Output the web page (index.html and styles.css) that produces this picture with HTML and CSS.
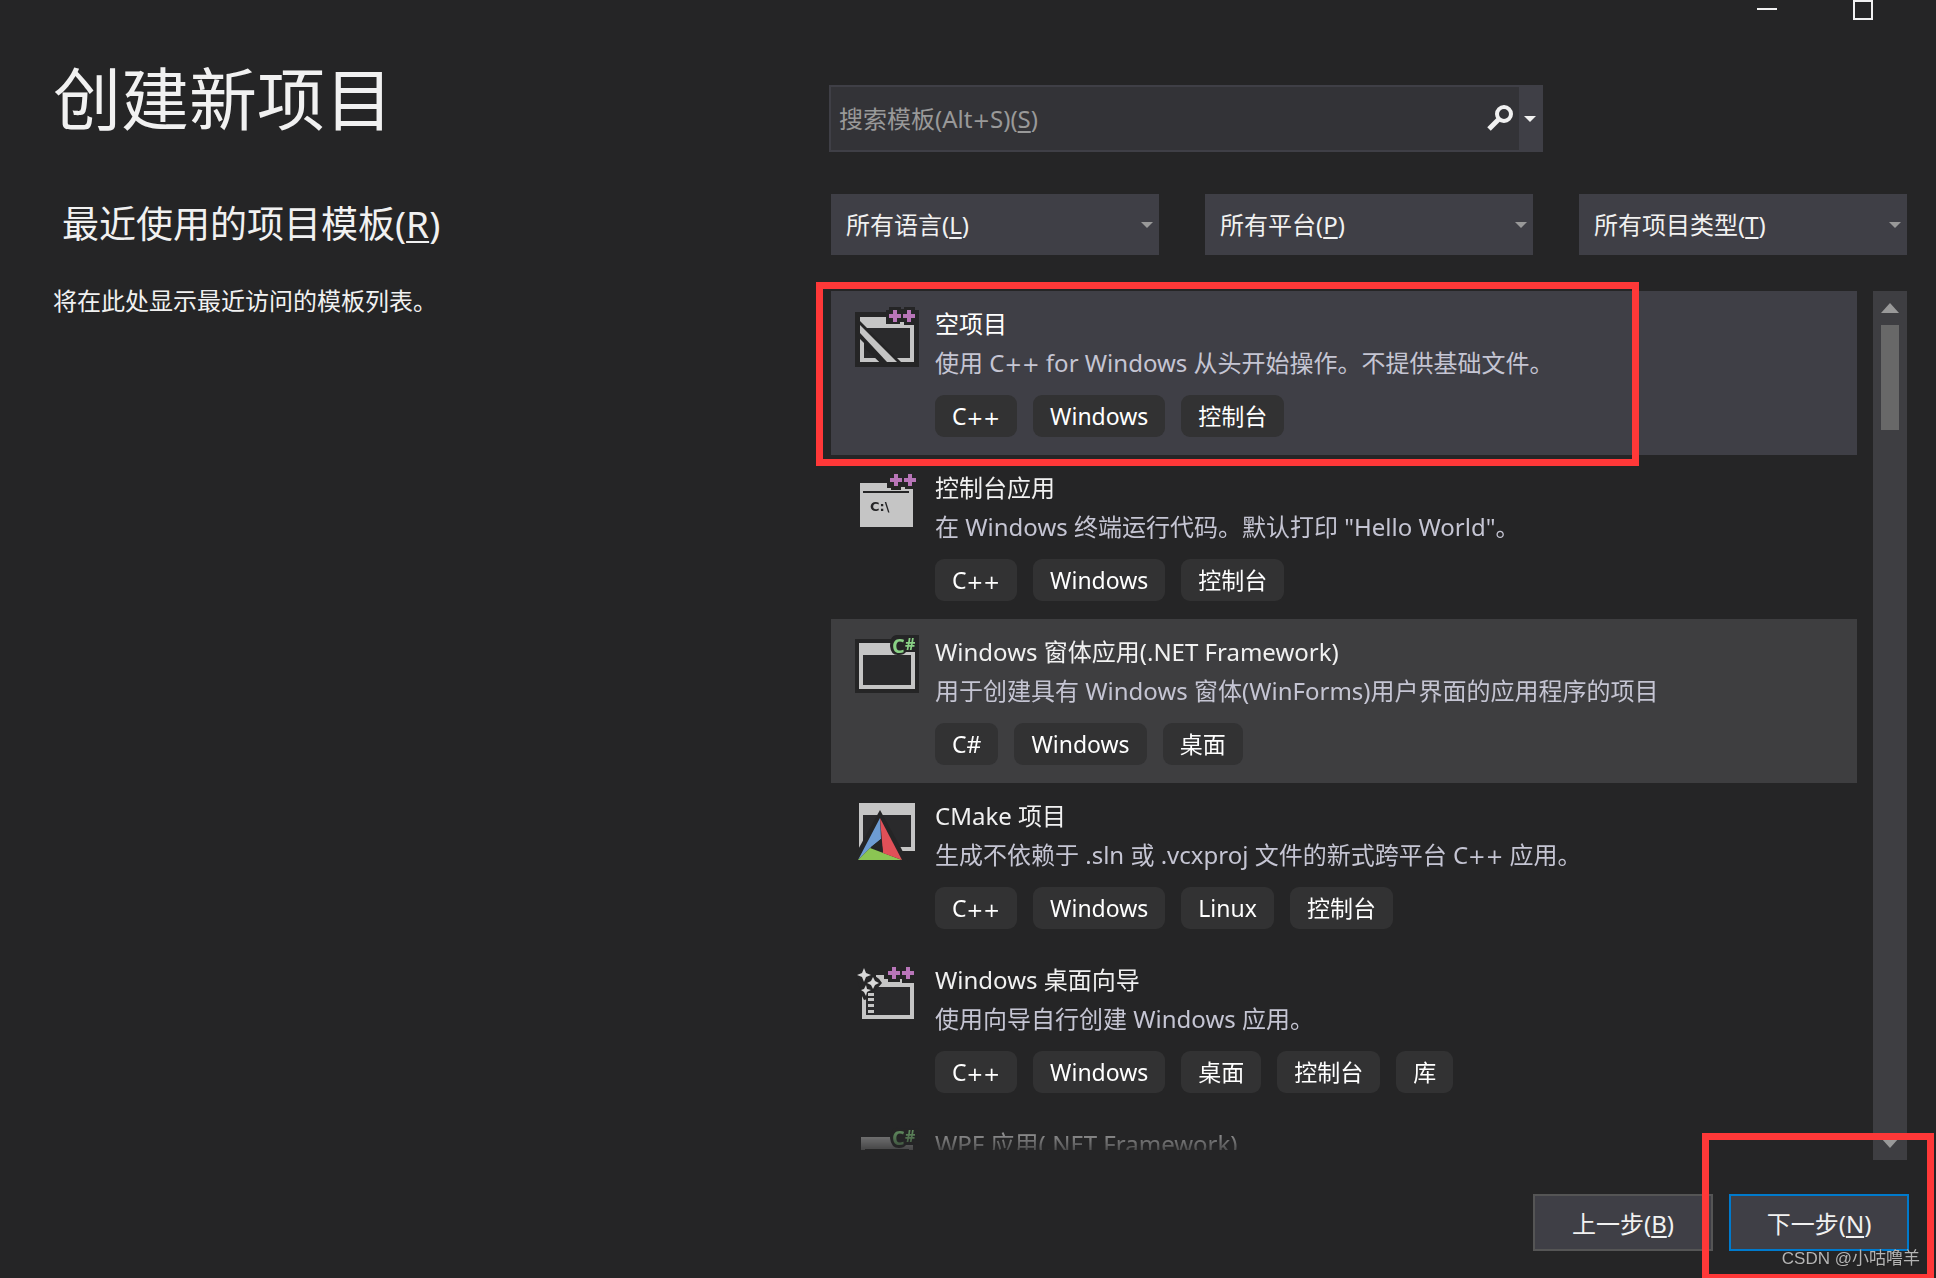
FILE: index.html
```html
<!DOCTYPE html>
<html lang="zh-CN">
<head>
<meta charset="utf-8">
<title>创建新项目</title>
<link rel="stylesheet" href="styles.css">
</head>
<body>
<div class="window">
  <div class="window-controls">
    <button type="button" aria-label="最小化"><span class="minimize"></span></button>
    <button type="button" aria-label="最大化"><span class="maximize"></span></button>
  </div>

  <aside class="recent">
    <h1>创建新项目</h1>
    <h2>最近使用的项目模板(<u>R</u>)</h2>
    <p>将在此处显示最近访问的模板列表。</p>
  </aside>

  <main class="browser">
    <div class="search">
      <input id="search" type="text" accesskey="s">
      <label for="search">搜索模板(Alt<span class="plus">+</span>S)(<u>S</u>)</label>
      <button class="search-go" type="button" aria-label="搜索">
        <svg width="26" height="26" viewBox="0 0 26 26" fill="none" stroke="#f1f1f1"><circle cx="17" cy="9" r="7" stroke-width="4"/><path d="M12 14L2 24" stroke-width="5"/></svg>
      </button>
      <button class="search-more" type="button" aria-label="搜索选项">
        <svg width="12" height="6" viewBox="0 0 12 6"><path d="M0 0h12L6 6z" fill="#f1f1f1"/></svg>
      </button>
    </div>

    <div class="filters">
      <div class="filter">
        <select id="language"><option value=""></option><option>C++</option><option>C#</option></select>
        <label for="language">所有语言(<u>L</u>)</label>
        <svg width="12" height="6" viewBox="0 0 12 6"><path d="M0 0h12L6 6z" fill="#999"/></svg>
      </div>
      <div class="filter">
        <select id="platform"><option value=""></option><option>Windows</option><option>Linux</option></select>
        <label for="platform">所有平台(<u>P</u>)</label>
        <svg width="12" height="6" viewBox="0 0 12 6"><path d="M0 0h12L6 6z" fill="#999"/></svg>
      </div>
      <div class="filter">
        <select id="type"><option value=""></option><option>控制台</option><option>桌面</option><option>库</option></select>
        <label for="type">所有项目类型(<u>T</u>)</label>
        <svg width="12" height="6" viewBox="0 0 12 6"><path d="M0 0h12L6 6z" fill="#999"/></svg>
      </div>
    </div>

    <div class="results">
      <ul class="templates">
        <li class="template selected">
          <svg class="icon" viewBox="0 0 64 64">
            <path d="M0 6H31V4H34V1H46V3H49V1H60V4H64V61H0z" fill="#252526"/>
            <path d="M5 11H31V18H45V16H49V19H59V56H5z" fill="#c5c5c5"/>
            <path d="M9 22H55V52H9z" fill="#2a2a2c"/>
            <path d="M5 15V38L24 56H46z" fill="#252526"/>
            <path d="M5 33L9 37V52H20L24 56H5z" fill="#c5c5c5"/>
            <path d="M5 19V27L32 56H42z" fill="#c5c5c5"/>
            <path d="M38 4h4v4h4v4h-4v4h-4v-4h-4v-4h4zM52 4h4v4h4v4h-4v4h-4v-4h-4v-4h4z" fill="#b875b8"/>
          </svg>
          <div class="info">
            <h3>空项目</h3>
            <p>使用 C<span class="plus">++</span> for Windows 从头开始操作。不提供基础文件。</p>
            <div class="tags"><span>C<span class="plus">++</span></span><span>Windows</span><span>控制台</span></div>
          </div>
        </li>
        <li class="template">
          <svg class="icon" viewBox="0 0 64 64">
            <path d="M5 13H32V18H36V20H46V17H50V19H58V57H5z" fill="#c5c5c5"/>
            <path d="M8 21H54V23H8z" fill="#252526"/>
            <path d="M39 4h4v4h4v4h-4v4h-4v-4h-4v-4h4zM53 4h4v4h4v4h-4v4h-4v-4h-4v-4h4z" fill="#b875b8"/>
            <text x="15" y="41" class="console">C:\</text>
          </svg>
          <div class="info">
            <h3>控制台应用</h3>
            <p>在 Windows 终端运行代码。默认打印 "Hello World"。</p>
            <div class="tags"><span>C<span class="plus">++</span></span><span>Windows</span><span>控制台</span></div>
          </div>
        </li>
        <li class="template hovered">
          <svg class="icon" viewBox="0 0 64 64">
            <path d="M0 5H36Q38 1 42 1H64V59H0z" fill="#252526"/>
            <path d="M4 9H60V55H4z" fill="#c5c5c5"/>
            <path d="M8 21H56V51H8z" fill="#2a2a2c"/>
            <path d="M64 1H44Q35 2 35 12Q36 22 44 21Q49 21 51 18H64z" fill="#252526"/>
            <text x="37" y="19" class="csharp">C</text><text x="50" y="16" class="csharp hash">#</text>
          </svg>
          <div class="info">
            <h3>Windows 窗体应用(.NET Framework)</h3>
            <p>用于创建具有 Windows 窗体(WinForms)用户界面的应用程序的项目</p>
            <div class="tags"><span>C#</span><span>Windows</span><span>桌面</span></div>
          </div>
        </li>
        <li class="template">
          <svg class="icon" viewBox="0 0 64 64">
            <path d="M4 5H60V53H4z" fill="#c5c5c5"/>
            <path d="M8 17H56V49H8z" fill="#2a2a2c"/>
            <path d="M25 12L0 57V64H53L46 50z" fill="#252526"/>
            <path d="M25 20L3 62L15 50L26 41z" fill="#6d9cd3"/>
            <path d="M3 62L15 50L47 62z" fill="#8bc553"/>
            <path d="M25 20L28 55L47 62z" fill="#e15058"/>
            <path d="M16 49L26 41L28 54z" fill="#252526"/>
          </svg>
          <div class="info">
            <h3>CMake 项目</h3>
            <p>生成不依赖于 .sln 或 .vcxproj 文件的新式跨平台 C<span class="plus">++</span> 应用。</p>
            <div class="tags"><span>C<span class="plus">++</span></span><span>Windows</span><span>Linux</span><span>控制台</span></div>
          </div>
        </li>
        <li class="template">
          <svg class="icon" viewBox="0 0 64 64">
            <path d="M21 13H29V17H33V20H45V17H47V21H59V57H7V21H21z" fill="#c5c5c5"/>
            <path d="M11 25H55V53H11z" fill="#2a2a2c"/>
            <path d="M0 8H17L20 14Q24 16 27 21Q22 27 19 29Q15 31 13 37L9 38L6 32z" fill="#252526"/>
            <path d="M13 31h6v3h-6zM13 36h6v3h-6zM13 42h6v3h-6zM13 48h6v3h-6z" fill="#c5c5c5"/>
            <path d="M9 6L11 11L16 13L11 15L9 20L7 15L2 13L7 11zM18 15L20 19L24 21L20 23L18 27L16 23L12 21L16 19zM11 23L12 27L16 28L12 30L11 34L9 30L6 28L9 27z" fill="#d8d8d8"/>
            <path d="M37 5h4v4h4v4h-4v4h-4v-4h-4v-4h4zM51 5h4v4h4v4h-4v4h-4v-4h-4v-4h4z" fill="#b875b8"/>
          </svg>
          <div class="info">
            <h3>Windows 桌面向导</h3>
            <p>使用向导自行创建 Windows 应用。</p>
            <div class="tags"><span>C<span class="plus">++</span></span><span>Windows</span><span>桌面</span><span>控制台</span><span>库</span></div>
          </div>
        </li>
        <li class="template">
          <svg class="icon" viewBox="0 0 64 64">
            <path d="M6 11H58V57H6z" fill="#c5c5c5"/>
            <path d="M10 23H54V53H10z" fill="#2a2a2c"/>
            <path d="M64 1H44Q35 2 35 12Q36 22 44 22Q49 22 51 19H64z" fill="#252526"/>
            <text x="37" y="19" class="csharp">C</text><text x="50" y="16" class="csharp hash">#</text>
          </svg>
          <div class="info">
            <h3>WPF 应用(.NET Framework)</h3>
          </div>
        </li>
      </ul>
      <div class="scrollbar">
        <svg width="18" height="10" viewBox="0 0 18 10"><path d="M9 0L18 10H0z" fill="#999"/></svg>
        <div class="thumb"></div>
        <svg width="18" height="10" viewBox="0 0 18 10"><path d="M9 10L18 0H0z" fill="#999"/></svg>
      </div>
    </div>

    <div class="actions">
      <button type="button">上一步(<u>B</u>)</button>
      <button type="button" class="primary">下一步(<u>N</u>)</button>
    </div>
    <div class="callout callout-template"></div>
  </main>

  <div class="callout callout-next"></div>
  <div class="watermark">CSDN @小咕噜羊</div>
</div>
</body>
</html>
```
FILE: styles.css
```css
* {
  box-sizing: border-box;
  margin: 0;
  padding: 0;
}

body {
  background: #252526;
  color: #f1f1f1;
  font-family: "Noto Sans", "Noto Sans CJK SC", sans-serif;
  font-size: 24px;
}

button,
input,
select {
  font: inherit;
  color: inherit;
  border: 0;
  border-radius: 0;
  background: none;
  outline: 0;
}

h1,
h2,
h3 {
  font-weight: 400;
}

u {
  text-decoration-thickness: 2px;
  text-underline-offset: 3px;
  text-decoration-skip-ink: none;
}

.window {
  position: relative;
  display: grid;
  grid-template-columns: minmax(0, 776px) minmax(0, 1fr);
  height: 100vh;
  padding: 0 29px 27px 53px;
  overflow: hidden;
}

.window-controls {
  position: absolute;
  top: 0;
  right: 63px;
  display: flex;
  gap: 76px;
}

.window-controls button {
  display: block;
  width: 20px;
  height: 20px;
}

.minimize {
  display: block;
  height: 2px;
  margin-bottom: 2px;
  background: #f1f1f1;
}

.maximize {
  display: block;
  height: 20px;
  border: 2px solid #f1f1f1;
}

/* Left side: heading and recent templates */

.recent {
  padding-top: 50px;
}

.recent h1 {
  font-size: 68px;
  line-height: 98px;
}

.recent h2 {
  margin: 51px 0 34px 9px;
  font-size: 37px;
  line-height: 50px;
}

.recent p {
  line-height: 36px;
}

/* Right side: search, filters, results */

.browser {
  position: relative;
  display: flex;
  flex-direction: column;
  min-height: 0;
  padding-top: 85px;
}

.search {
  position: relative;
  display: flex;
  width: 714px;
  height: 67px;
  border: 2px solid #3f3f46;
  background: #333337;
}

.search input {
  flex: 1;
  min-width: 0;
  padding-left: 8px;
}

.search label {
  position: absolute;
  left: 8px;
  line-height: 63px;
  color: #999;
  pointer-events: none;
}

.search-go {
  width: 38px;
  padding-top: 6px;
}

.search-more {
  display: flex;
  align-items: center;
  justify-content: center;
  width: 22px;
  background: #3f3f46;
}

.filters {
  display: flex;
  gap: 46px;
  margin: 42px 0 36px 2px;
}

.filter {
  position: relative;
  flex: 1;
  height: 61px;
  background: #3f3f46;
}

.filter select {
  width: 100%;
  height: 100%;
  padding-left: 15px;
  appearance: none;
}

.filter option {
  background: #252526;
}

.filter label {
  position: absolute;
  left: 15px;
  line-height: 61px;
  pointer-events: none;
}

.filter svg {
  position: absolute;
  right: 6px;
  top: 28px;
  pointer-events: none;
}

.results {
  display: flex;
  flex: 1;
  gap: 16px;
  min-height: 0;
  margin-left: 2px;
}

.templates {
  flex: 1;
  margin-bottom: 10px;
  overflow: hidden;
  list-style: none;
  mask-image: linear-gradient(to top, rgba(0, 0, 0, 0.2), #000 40px);
}

.template {
  display: flex;
  gap: 16px;
  padding: 13px 24px 18px;
}

.template.selected {
  background: #3f3f46;
}

.template.hovered {
  background: #3e3e40;
}

.icon {
  flex: none;
  width: 64px;
  height: 64px;
  margin-top: 2px;
}

.console {
  font: 700 13px "DejaVu Sans", sans-serif;
  fill: #252526;
}

.csharp {
  font: 700 20px "Open Sans", sans-serif;
  fill: #89d185;
}

.csharp.hash {
  font-size: 16px;
}

.info h3 {
  font-size: 24px;
  line-height: 39px;
}

.selected h3 {
  color: #fff;
}

.info p {
  line-height: 39px;
  color: #c5c5d3;
}

.tags {
  display: flex;
  gap: 16px;
  margin-top: 13px;
  font-size: 23px;
  line-height: 42px;
  color: #fff;
}

.tags > span {
  height: 42px;
  padding: 0 17px;
  border-radius: 9px;
  background: #323233;
}

.plus {
  font-family: "DejaVu Sans", sans-serif;
  font-size: 21px;
  line-height: 1;
}

.tags .plus {
  font-size: 20px;
}

.scrollbar {
  display: flex;
  flex-direction: column;
  align-items: center;
  width: 34px;
  padding: 12px 0;
  background: #3e3e42;
}

.thumb {
  width: 18px;
  height: 105px;
  margin: 12px 0 auto;
  background: #686868;
}

.actions {
  display: flex;
  justify-content: flex-end;
  gap: 16px;
  margin: 34px -2px 0 0;
}

.actions button {
  width: 180px;
  height: 57px;
  border: 2px solid #555;
  background: #3f3f46;
}

.actions .primary {
  border-color: #007acc;
}

/* Annotations over the window */

.callout {
  position: absolute;
  border: 7px solid #ff3838;
  pointer-events: none;
}

.callout-template {
  left: -13px;
  top: 282px;
  width: 823px;
  height: 184px;
}

.callout-next {
  right: 2px;
  bottom: -3px;
  width: 232px;
  height: 148px;
}

.watermark {
  position: absolute;
  right: 16px;
  bottom: 6px;
  font: 17px/26px "Liberation Sans", "Noto Sans CJK SC", sans-serif;
  color: #b4b4b4;
  text-shadow: 1px 1px 1px #222;
}
```
